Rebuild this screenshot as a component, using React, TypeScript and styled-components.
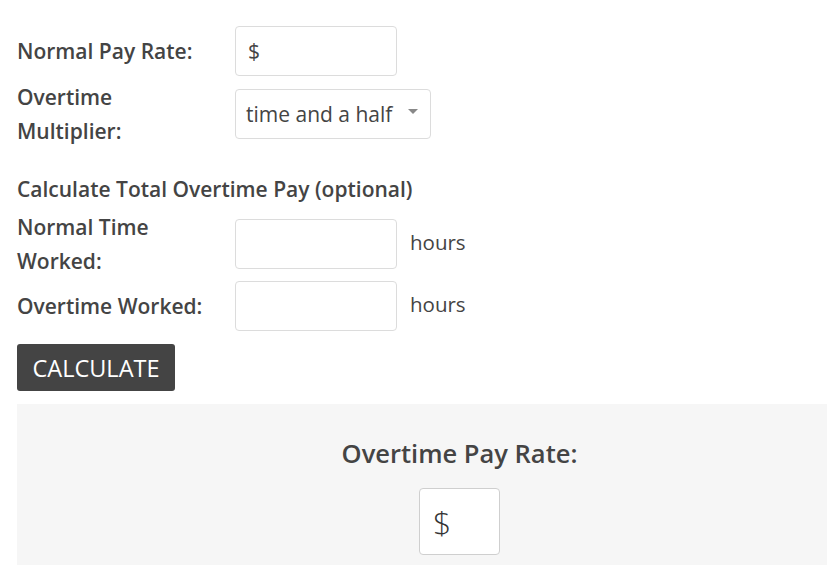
import React from 'react';
import styled, { createGlobalStyle } from 'styled-components';

const GlobalStyle = createGlobalStyle`
  html, body {
    margin: 0;
    padding: 0;
    overflow: hidden;
    background: #fff;
  }
  body {
    font-family: 'Open Sans', 'Noto Sans', sans-serif;
    color: #444;
  }
`;

const Page = styled.div`
  padding: 26px 0 0 17px;
  width: 885px;
`;

const Row = styled.div<{ gap?: number }>`
  display: flex;
  align-items: center;
  margin-bottom: ${({ gap }) => gap ?? 4}px;
`;

const Label = styled.label`
  width: 196px;
  margin-right: 22px;
  font-size: 21px;
  font-weight: 600;
  line-height: 34px;
`;

const Field = styled.div<{ w: number }>`
  box-sizing: border-box;
  width: ${({ w }) => w}px;
  height: 50px;
  border: 1px solid #dcdcdc;
  border-radius: 4px;
  background: #fff;
  display: flex;
  align-items: center;
  padding: 0 12px;
  font-size: 21px;
  color: #444;
`;

const Select = styled(Field)`
  padding: 0 12px 0 10px;
  white-space: nowrap;
`;

const Arrow = styled.span`
  margin-left: auto;
  width: 0;
  height: 0;
  border-left: 5px solid transparent;
  border-right: 5px solid transparent;
  border-top: 5px solid #888;
  margin-top: -6px;
`;

const Unit = styled.span`
  margin-left: 13px;
  font-size: 20.5px;
  margin-top: -4px;
`;

const Heading = styled.div`
  font-size: 21px;
  font-weight: 600;
  line-height: 34px;
  margin: 24px 0 4px;
`;

const Button = styled.button`
  box-sizing: border-box;
  height: 47px;
  width: 158px;
  margin-top: 9px;
  background: #444;
  color: #fff;
  border: none;
  border-radius: 3px;
  font-family: inherit;
  font-size: 23.5px;
  padding: 0;
  cursor: pointer;
`;

const Result = styled.div`
  margin-top: 13px;
  background: #f6f6f6;
  padding: 30px 0 20px;
  display: flex;
  flex-direction: column;
  align-items: center;
`;

const ResultTitle = styled.div`
  font-size: 25.5px;
  font-weight: 600;
  line-height: 38px;
`;

const ResultBox = styled.div`
  box-sizing: border-box;
  margin-top: 16px;
  width: 81px;
  height: 67px;
  border: 1px solid #cfcfcf;
  border-radius: 4px;
  background: #fff;
  display: flex;
  align-items: center;
  padding-left: 13px;
  font-size: 32px;
  font-weight: 300;
  color: #333;
`;

export default function App() {
  return (
    <>
      <GlobalStyle />
      <Page>
        <Row>
          <Label>Normal Pay Rate:</Label>
          <Field w={162}>$</Field>
        </Row>
        <Row>
          <Label>Overtime Multiplier:</Label>
          <Select w={196}>
            time and a half
            <Arrow />
          </Select>
        </Row>
        <Heading>Calculate Total Overtime Pay (optional)</Heading>
        <Row gap={3}>
          <Label>Normal Time Worked:</Label>
          <Field w={162} />
          <Unit>hours</Unit>
        </Row>
        <Row>
          <Label>Overtime Worked:</Label>
          <Field w={162} />
          <Unit>hours</Unit>
        </Row>
        <Button>CALCULATE</Button>
        <Result>
          <ResultTitle>Overtime Pay Rate:</ResultTitle>
          <ResultBox>$</ResultBox>
        </Result>
      </Page>
    </>
  );
}
